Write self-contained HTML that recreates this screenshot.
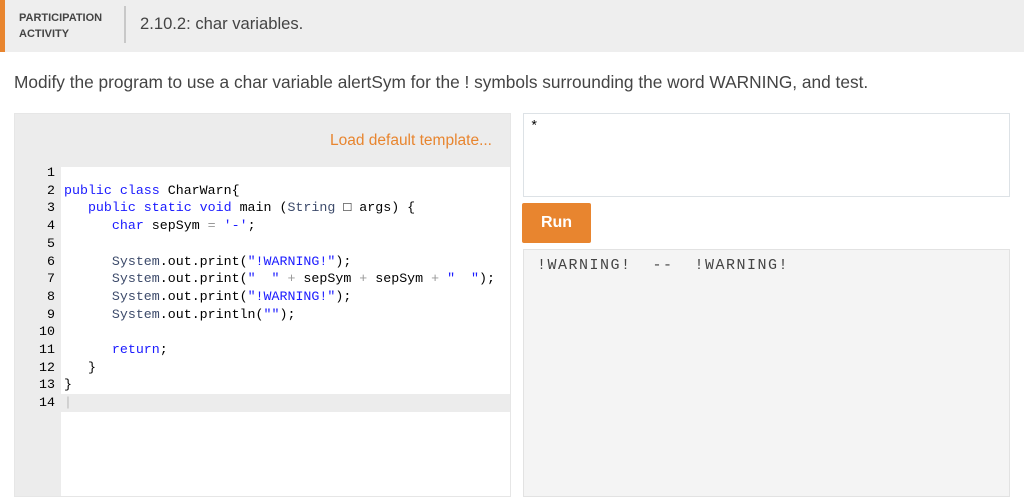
<!DOCTYPE html>
<html><head><meta charset="utf-8"><style>
*{margin:0;padding:0;box-sizing:border-box}
body{width:1024px;height:504px;background:#fff;font-family:"Liberation Sans",sans-serif;position:relative;overflow:hidden}
.hdr{position:absolute;left:0;top:0;width:1024px;height:52px;background:#eeeeee;border-left:5px solid #e8852f}
.pa{position:absolute;left:14px;top:10px;font-size:11px;font-weight:bold;color:#444;line-height:16px}
.sep{position:absolute;left:119px;top:6px;width:2px;height:37px;background:#c8c8c8}
.title{position:absolute;left:135px;top:14px;font-size:16.6px;color:#444}
.inst{position:absolute;left:14px;top:72px;font-size:17.3px;color:#444}
.ed{position:absolute;left:14px;top:113px;width:497px;height:384px;background:#fff;border:1px solid #e6e6e6}
.edtop{position:absolute;left:0;top:0;width:100%;height:53px;background:#ececec}
.load{position:absolute;right:18px;top:18px;font-size:15.5px;color:#e8852f}
.gut{position:absolute;left:0;top:53px;width:46px;bottom:0;background:#ececec}
.code{position:absolute;left:0;top:50px;width:100%;font-family:"Liberation Mono",monospace;font-size:13.3px;line-height:17.7px;color:#000;white-space:pre}
.ln{display:inline-block;width:40px;text-align:right;color:#000;margin-right:9px}
.k{color:#1a1aff}.s{color:#1a1aff}.t{color:#3d4b6b}.o{color:#999}
.hl{background:#ececec}
.inp{position:absolute;left:523px;top:113px;width:487px;height:84px;border:1px solid #dde2e6;font-family:"Liberation Mono",monospace;font-size:14px;padding:5px 6px}
.run{position:absolute;left:522px;top:203px;width:69px;height:40px;background:#e8852f;border-radius:2px;color:#fff;font-weight:bold;font-size:16px;text-align:center;line-height:40px}
.out{position:absolute;left:523px;top:249px;width:487px;height:248px;background:#f4f4f4;border:1px solid #e2e2e2;font-family:"Liberation Mono",monospace;font-size:15px;letter-spacing:1.5px;color:#444;padding:7px 13px;white-space:pre}
</style></head><body>
<div class="hdr"><div class="pa">PARTICIPATION<br>ACTIVITY</div><div class="sep"></div><div class="title">2.10.2: char variables.</div></div>
<div class="inst">Modify the program to use a char variable alertSym for the ! symbols surrounding the word WARNING, and test.</div>
<div class="ed"><div class="edtop"><div class="load">Load default template...</div></div><div class="gut"></div>
<div class="code"><span class="ln">1</span>
<span class="ln">2</span><span class="k">public class</span> CharWarn{
<span class="ln">3</span>   <span class="k">public static void</span> main (<span class="t">String</span> &#9633; args) {
<span class="ln">4</span>      <span class="k">char</span> sepSym <span class="o">=</span> <span class="s">'-'</span>;
<span class="ln">5</span>
<span class="ln">6</span>      <span class="t">System</span>.out.print(<span class="s">"!WARNING!"</span>);
<span class="ln">7</span>      <span class="t">System</span>.out.print(<span class="s">"  "</span> <span class="o">+</span> sepSym <span class="o">+</span> sepSym <span class="o">+</span> <span class="s">"  "</span>);
<span class="ln">8</span>      <span class="t">System</span>.out.print(<span class="s">"!WARNING!"</span>);
<span class="ln">9</span>      <span class="t">System</span>.out.println(<span class="s">""</span>);
<span class="ln">10</span>
<span class="ln">11</span>      <span class="k">return</span>;
<span class="ln">12</span>   }
<span class="ln">13</span>}
<div class="hl"><span class="ln">14</span><span style="color:#bbb">|</span></div></div>
</div>
<div class="inp">*</div>
<div class="run">Run</div>
<div class="out">!WARNING!  --  !WARNING!</div>
</body></html>
